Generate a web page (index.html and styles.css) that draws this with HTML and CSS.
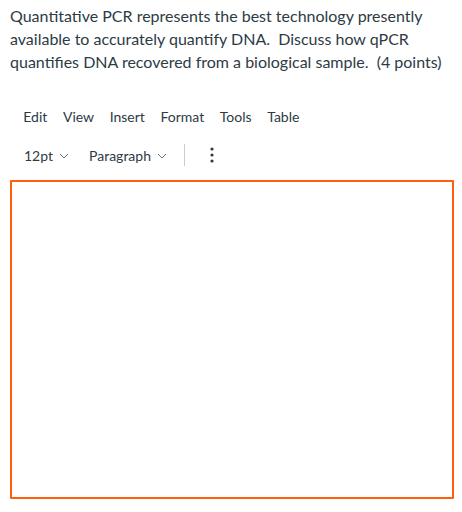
FILE: index.html
```html
<!DOCTYPE html>
<html>
<head>
<meta charset="utf-8">
<link rel="stylesheet" href="styles.css">
</head>
<body>
<div class="page">
  <p class="question">Quantitative PCR represents the best technology presently available to accurately quantify DNA.&nbsp; Discuss how qPCR quantifies DNA recovered from a biological sample.&nbsp; (4 points)</p>
  <div class="editor">
    <div class="menubar">
      <span class="menu">Edit</span>
      <span class="menu">View</span>
      <span class="menu">Insert</span>
      <span class="menu">Format</span>
      <span class="menu">Tools</span>
      <span class="menu">Table</span>
    </div>
    <div class="toolbar">
      <span class="select size">12pt <svg class="chev" width="10" height="6" viewBox="0 0 10 6"><path d="M1 1l4 4 4-4" fill="none" stroke="#6b7780" stroke-width="1"/></svg></span>
      <span class="select para">Paragraph <svg class="chev" width="10" height="6" viewBox="0 0 10 6"><path d="M1 1l4 4 4-4" fill="none" stroke="#6b7780" stroke-width="1"/></svg></span>
      <span class="divider"></span>
      <span class="more"><svg width="4" height="16" viewBox="0 0 4 16"><circle cx="2" cy="2" r="1.6" fill="#2d3b45"/><circle cx="2" cy="8" r="1.6" fill="#2d3b45"/><circle cx="2" cy="14" r="1.6" fill="#2d3b45"/></svg></span>
    </div>
    <div class="content"></div>
  </div>
</div>
</body>
</html>
```
FILE: styles.css
```css
html, body {
  margin: 0;
  padding: 0;
  background: #ffffff;
}
.page {
  padding: 4px 8px 0 10px;
  font-family: Lato, "Open Sans", sans-serif;
  color: #2d3b45;
}
.question {
  margin: 0;
  font-size: 16px;
  line-height: 23px;
}
.editor {
  margin-top: 29px;
}
.menubar {
  display: flex;
  padding-left: 5.5px;
  height: 28px;
  align-items: center;
}
.menu {
  font-size: 14px;
  padding: 0 7.8px;
  color: #2d3b45;
}
.toolbar {
  display: flex;
  align-items: center;
  height: 38px;
  margin-top: 6px;
  padding-left: 14px;
}
.select {
  font-size: 14px;
  display: flex;
  align-items: center;
}
.chev {
  margin-left: 6px;
  margin-top: 1px;
}
.size {
  margin-right: 20px;
}
.para {
  margin-right: 17px;
}
.divider {
  width: 1px;
  height: 22px;
  background: #c7cdd1;
}
.more {
  margin-left: 25px;
  display: flex;
  align-items: center;
}
.content {
  margin-top: 6px;
  height: 315px;
  border: 2px solid #ff5f0a;
  border-radius: 1px;
}
```
